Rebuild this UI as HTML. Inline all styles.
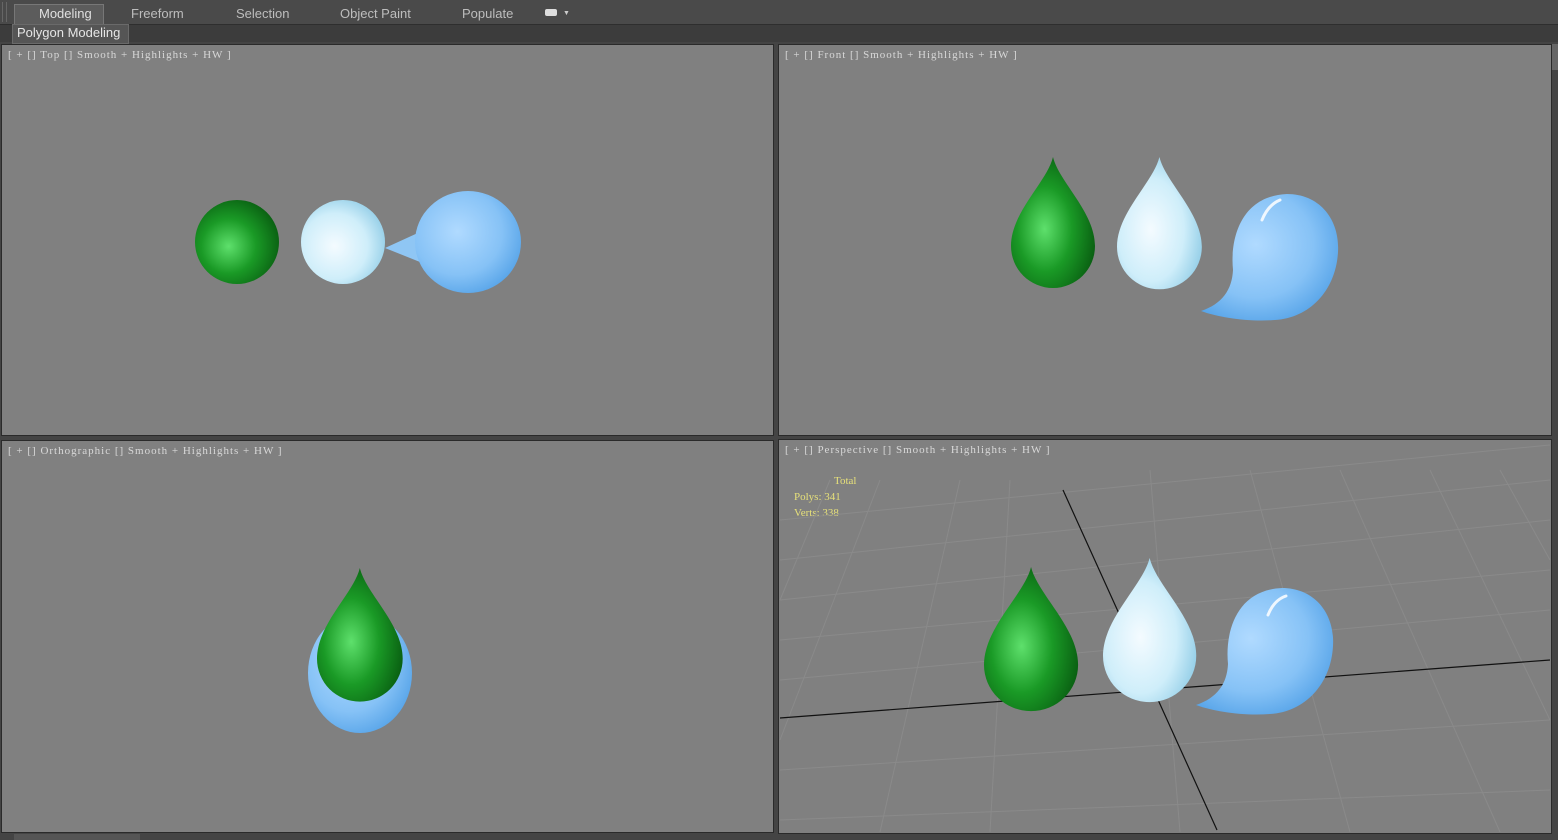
<!DOCTYPE html>
<html><head><meta charset="utf-8"><style>
body{margin:0;width:1558px;height:840px;background:#444;overflow:hidden;font-family:"Liberation Sans",sans-serif;position:relative}
.tb{position:absolute;left:0;top:0;width:1558px;height:24px;background:#4a4a4a;border-bottom:1px solid #2e2e2e}
.tab{position:absolute;top:6px;font-size:13px;color:#bdbdbd}
.vp{position:absolute;background:#808080;border:1px solid #2a2a2a}
.lbl{position:absolute;left:6px;top:4px;font-family:"Liberation Serif",serif;font-size:11px;color:#d8d8d8;letter-spacing:1px}
.st{position:absolute;font-family:"Liberation Serif",serif;font-size:11px;color:#e6e07a}
</style></head><body>
<div class="tb">
<div style="position:absolute;left:2px;top:2px;width:3px;height:20px;border-left:1px solid #666;border-right:1px solid #666"></div>
<div style="position:absolute;left:14px;top:4px;width:88px;height:20px;background:#5c5c5c;border:1px solid #777;border-bottom:none"></div>
<div class="tab" style="left:39px;color:#e0e0e0">Modeling</div>
<div class="tab" style="left:131px">Freeform</div>
<div class="tab" style="left:236px">Selection</div>
<div class="tab" style="left:340px">Object Paint</div>
<div class="tab" style="left:462px">Populate</div>
<div style="position:absolute;left:545px;top:9px;width:12px;height:7px;background:#ddd;border-radius:2px"></div>
<div style="position:absolute;left:563px;top:10px;font-size:7px;color:#ccc">▼</div>
</div>
<div style="position:absolute;left:0;top:25px;width:1558px;height:17px;background:#3c3c3c"></div>
<div style="position:absolute;left:12px;top:24px;width:115px;height:18px;background:#555;border:1px solid #6a6a6a"></div>
<div style="position:absolute;left:17px;top:25px;font-size:13px;color:#e6e6e6">Polygon Modeling</div>
<div style="position:absolute;left:1552px;top:44px;width:6px;height:26px;background:#666"></div>

<div class="vp" style="left:1px;top:44px;width:771px;height:390px"><div class="lbl">[ + [] Top [] Smooth + Highlights + HW ]</div></div>
<div class="vp" style="left:778px;top:44px;width:772px;height:390px"><div class="lbl">[ + [] Front [] Smooth + Highlights + HW ]</div></div>
<div class="vp" style="left:1px;top:440px;width:771px;height:391px"><div class="lbl">[ + [] Orthographic [] Smooth + Highlights + HW ]</div></div>
<div class="vp" style="left:778px;top:439px;width:772px;height:393px"><div class="lbl">[ + [] Perspective [] Smooth + Highlights + HW ]</div>
<div class="st" style="left:55px;top:35px">Total</div>
<div class="st" style="left:15px;top:51px">Polys: 341</div>
<div class="st" style="left:15px;top:67px">Verts: 338</div></div>
<div style="position:absolute;left:14px;top:834px;width:126px;height:6px;background:#555"></div>

<svg width="1558" height="840" style="position:absolute;left:0;top:0">
<defs>
<radialGradient id="g" cx="0.4" cy="0.55" r="0.65"><stop offset="0" stop-color="#5ee06c"/><stop offset="0.5" stop-color="#1a9a26"/><stop offset="1" stop-color="#085a10"/></radialGradient>
<radialGradient id="w" cx="0.4" cy="0.55" r="0.65"><stop offset="0" stop-color="#f4fbff"/><stop offset="0.6" stop-color="#cfeefa"/><stop offset="1" stop-color="#90cce6"/></radialGradient>
<radialGradient id="b" cx="0.4" cy="0.4" r="0.7"><stop offset="0" stop-color="#b0daff"/><stop offset="0.6" stop-color="#86c2f6"/><stop offset="1" stop-color="#4f9fe6"/></radialGradient>
<path id="d" d="M42 0 C48 25 84 55 84 89 A42 42 0 0 1 0 89 C0 55 36 25 42 0Z"/>
<path id="bb" d="M1287 194 C1320 194 1340 220 1338 252 C1336 290 1310 318 1275 320 C1250 322 1220 318 1201 311 C1222 304 1232 290 1233 270 C1230 240 1240 196 1287 194Z"/>
</defs>
<g stroke="#8a8a8a" stroke-width="1" fill="none">
<path d="M780 560 L1550 480 M780 600 L1550 520 M780 640 L1550 570 M780 680 L1550 610 M780 770 L1550 720 M780 820 L1550 790 M780 520 L1550 445"/>
<path d="M880 480 L780 740 M960 480 L880 832 M1150 470 L1180 832 M1250 470 L1350 832 M1340 470 L1500 832 M1430 470 L1550 720 M1500 470 L1550 560 M830 480 L780 600 M1010 480 L990 832"/>
</g>
<path d="M1063 490 L1217 830 M780 718 L1550 660" stroke="#111" stroke-width="1.2"/>
<circle cx="237" cy="242" r="42" fill="url(#g)"/>
<circle cx="343" cy="242" r="42" fill="url(#w)"/>
<path d="M385 248 L420 232 L420 262Z" fill="#8fc6f4"/>
<ellipse cx="468" cy="242" rx="53" ry="51" fill="url(#b)"/>
<use href="#d" transform="translate(1011,157)" fill="url(#g)"/>
<use href="#d" transform="translate(1117,157) scale(1.01,1.01)" fill="url(#w)"/>
<use href="#bb" fill="url(#b)"/>
<ellipse cx="360" cy="673" rx="52" ry="60" fill="url(#b)"/>
<use href="#d" transform="translate(317,568) scale(1.02,1.02)" fill="url(#g)"/>
<use href="#d" transform="translate(984,567) scale(1.12,1.1)" fill="url(#g)"/>
<use href="#d" transform="translate(1103,558) scale(1.11,1.1)" fill="url(#w)"/>
<use href="#bb" transform="translate(-5,394)" fill="url(#b)"/>
<g fill="none" stroke="#fff" stroke-width="3" stroke-linecap="round" opacity="0.85">
<path d="M1262 220 Q1268 205 1280 200"/><path d="M1268 615 Q1274 600 1286 596"/>
</g>
</svg>
</body></html>
